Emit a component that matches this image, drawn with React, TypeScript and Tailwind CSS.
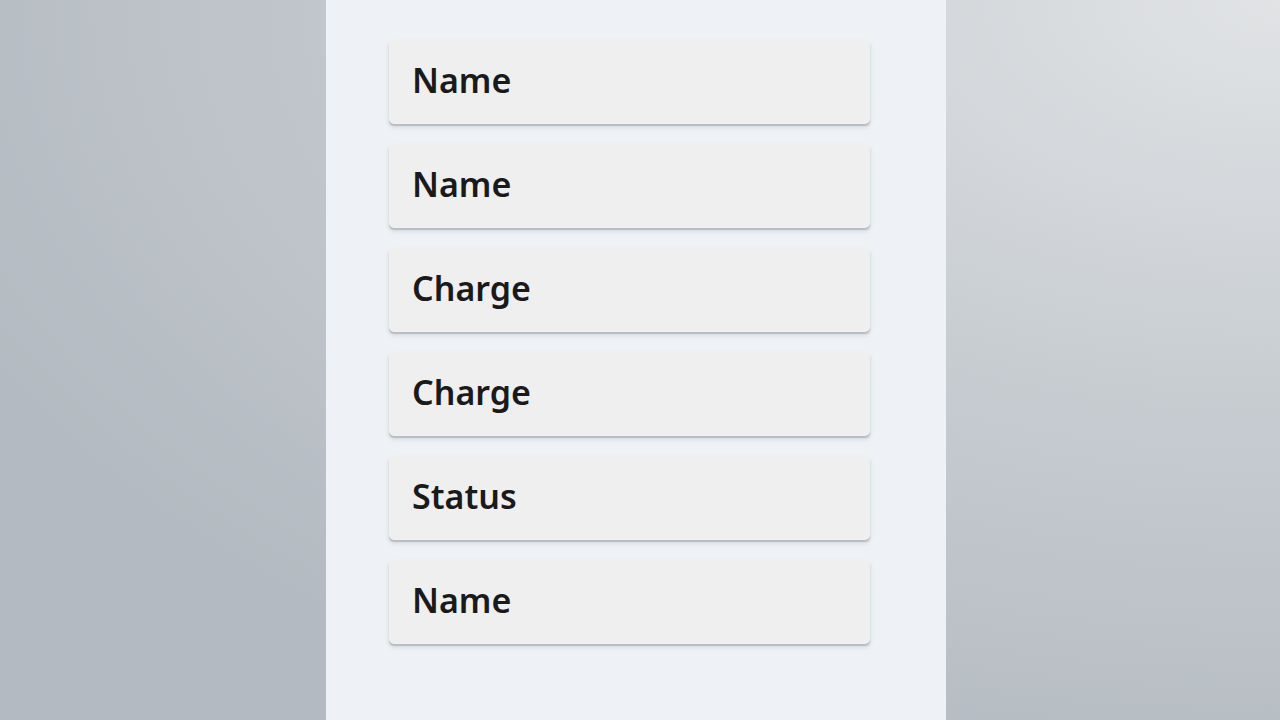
const fields = ['Name', 'Name', 'Charge', 'Charge', 'Status', 'Name'];

function FieldRow({ label }: { label: string }) {
  return (
    <div className="flex h-[84px] w-[481px] items-center rounded-[5px] bg-[#efefef] pb-1 pl-[23px] shadow-[0_2px_1px_#b9bdc2,0_3px_4px_rgba(120,130,140,0.25)]">
      <span className="text-[34px] font-semibold text-[#1a1a1a]">{label}</span>
    </div>
  );
}

export default function App() {
  return (
    <div
      className="flex h-[720px] w-full justify-center overflow-hidden bg-[radial-gradient(ellipse_at_top_right,#e1e3e5_0%,#c7ccd1_40%,#b3bac1_80%)] pr-[8px]"
      style={{ fontFamily: '"Noto Sans", "Open Sans", sans-serif' }}
    >
      <div className="h-full w-[620px] bg-[#eef2f7] pl-[63px] pt-[40px]">
        <div className="flex flex-col gap-5">
          {fields.map((f, i) => (
            <FieldRow key={i} label={f} />
          ))}
        </div>
      </div>
    </div>
  );
}
